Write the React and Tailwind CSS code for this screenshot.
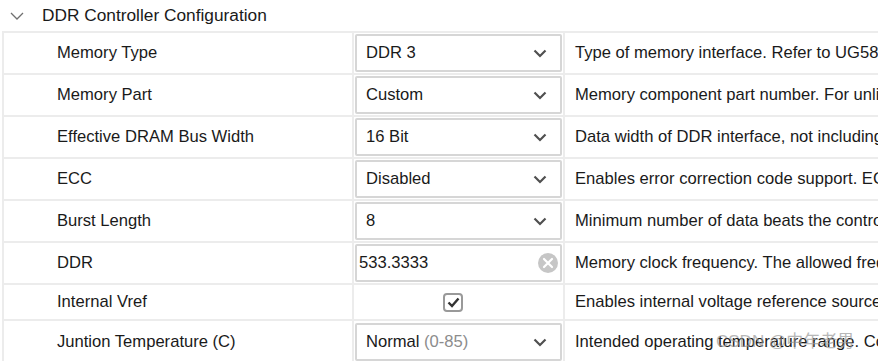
import React from "react";

const Chevron = () => (
  <svg width="14" height="9" viewBox="0 0 14 9" className="shrink-0">
    <path d="M1.5 1.5 L7 7 L12.5 1.5" fill="none" stroke="#505050" strokeWidth="2.2" />
  </svg>
);

const Select = ({ children }) => (
  <div className="flex h-[38px] w-[207px] items-center justify-between rounded-[2px] border-2 border-[#d6d6d6] bg-white pl-[9px] pr-[13px]">
    <span>{children}</span>
    <Chevron />
  </div>
);

const rows = [
  { label: "Memory Type", value: "DDR 3", desc: "Type of memory interface. Refer to UG586 for details on memory interface options." },
  { label: "Memory Part", value: "Custom", desc: "Memory component part number. For unlisted parts, select Custom and set timings." },
  { label: "Effective DRAM Bus Width", value: "16 Bit", desc: "Data width of DDR interface, not including ECC data width." },
  { label: "ECC", value: "Disabled", desc: "Enables error correction code support. ECC is only supported for 32-bit width." },
  { label: "Burst Length", value: "8", desc: "Minimum number of data beats the controller will use for each transfer." },
];

export default function App() {
  return (
    <div className="relative h-[361px] w-[879px] overflow-hidden bg-white text-[16.6px] text-[#1a1a1a]" style={{ fontFamily: '"Liberation Sans", Arial, sans-serif' }}>
      <div className="flex h-[31px] items-center">
        <svg width="14" height="8" viewBox="0 0 14 8" className="ml-[10px]">
          <path d="M1 1 L7 7 L13 1" fill="none" stroke="#707070" strokeWidth="1.3" />
        </svg>
        <span className="ml-[18px] text-[17.3px]">DDR Controller Configuration</span>
      </div>
      <div className="ml-[2px] w-[876px] border-l-2 border-t-2 border-[#ececec]">
        {rows.map((r) => (
          <div key={r.label} className="flex h-[42px] border-b-2 border-[#ececec]">
            <div className="flex w-[348px] items-center pl-[53px]">{r.label}</div>
            <div className="flex w-[211px] items-center border-l-2 border-[#ececec] pl-[1px]">
              <Select>{r.value}</Select>
            </div>
            <div className="flex min-w-0 flex-1 items-center overflow-hidden whitespace-nowrap border-l-2 border-[#ececec] pl-[10px]">
              {r.desc}
            </div>
          </div>
        ))}
        <div className="flex h-[42px] border-b-2 border-[#ececec]">
          <div className="flex w-[348px] items-center pl-[53px]">DDR</div>
          <div className="flex w-[211px] items-center border-l-2 border-[#ececec] pl-[1px]">
            <div className="flex h-[38px] w-[207px] items-center justify-between rounded-[2px] border-2 border-[#d6d6d6] bg-white pl-[2px] pr-[2px]">
              <span>533.3333</span>
              <svg width="20" height="20" viewBox="0 0 20 20">
                <circle cx="10" cy="10" r="10" fill="#c6c6c6" />
                <path d="M6 6 L14 14 M14 6 L6 14" stroke="#ffffff" strokeWidth="2.2" strokeLinecap="round" />
              </svg>
            </div>
          </div>
          <div className="flex min-w-0 flex-1 items-center overflow-hidden whitespace-nowrap border-l-2 border-[#ececec] pl-[10px]">
            Memory clock frequency. The allowed frequency range depends on the speed grade.
          </div>
        </div>
        <div className="flex h-[36px] border-b-2 border-[#ececec]">
          <div className="flex w-[348px] items-center pl-[53px]">Internal Vref</div>
          <div className="flex w-[211px] items-center border-l-2 border-[#ececec] pl-[89px]">
            <div className="flex h-[19px] w-[20px] items-center justify-center rounded-[4px] border-2 border-[#999999] bg-white">
              <svg width="13" height="11" viewBox="0 0 13 11">
                <path d="M1.5 5.5 L5 9 L11.5 1.5" fill="none" stroke="#333333" strokeWidth="2.4" />
              </svg>
            </div>
          </div>
          <div className="flex min-w-0 flex-1 items-center overflow-hidden whitespace-nowrap border-l-2 border-[#ececec] pl-[10px]">
            Enables internal voltage reference source for DDR I/O banks.
          </div>
        </div>
        <div className="flex h-[42px]">
          <div className="flex w-[348px] items-center pl-[53px]">Juntion Temperature (C)</div>
          <div className="flex w-[211px] items-center border-l-2 border-[#ececec] pl-[1px]">
            <Select>
              Normal <span className="text-[#8c8c8c]">(0-85)</span>
            </Select>
          </div>
          <div className="flex min-w-0 flex-1 items-center overflow-hidden whitespace-nowrap border-l-2 border-[#ececec] pl-[10px]">
            Intended operating temperature range. Commercial or industrial.
          </div>
        </div>
      </div>
      <div
        className="absolute left-[716px] top-[329px] text-[17px] text-[#9a9a9a] opacity-70"
        style={{ fontFamily: '"Liberation Sans", "Noto Sans CJK SC", sans-serif' }}
      >
        CSDN @中年老男
      </div>
    </div>
  );
}
